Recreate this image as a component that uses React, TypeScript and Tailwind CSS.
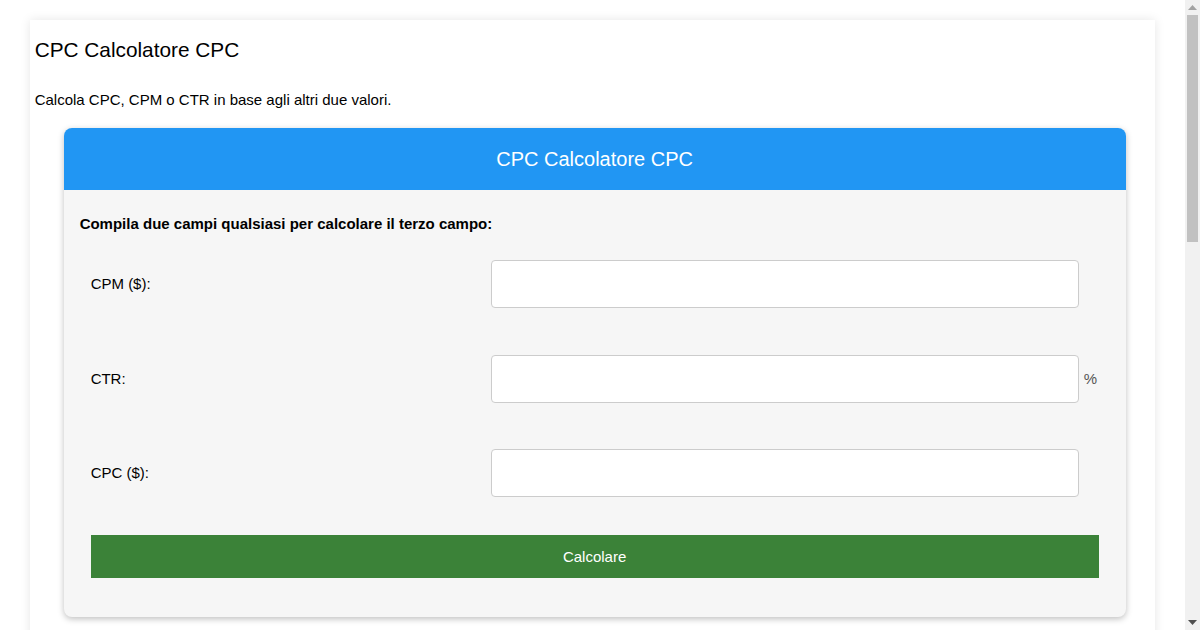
import React from "react";

const font = { fontFamily: '"Liberation Sans", Arial, sans-serif' };

function Row({ label, suffix }: { label: string; suffix?: string }) {
  return (
    <div className="flex items-center pl-[27px] h-[48px]">
      <label className="w-[400px] text-[15px] leading-[18px] text-black">{label}</label>
      <input
        type="text"
        className="w-[588px] h-[48px] bg-white border border-[#cccccc] rounded-[4px] outline-none px-2 text-[15px]"
      />
      {suffix && <span className="ml-[5px] text-[15px] leading-[18px] text-[#555555]">{suffix}</span>}
    </div>
  );
}

export default function App() {
  return (
    <div className="h-[630px] w-[1200px] flex overflow-hidden bg-white" style={font}>
      <div className="flex-1 overflow-hidden">
        <div className="w-[95%] mx-auto mt-5 bg-white shadow-[0_0_10px_rgba(0,0,0,0.1)] pt-[18px] pl-[5px] pb-10 min-h-[1000px]">
          <h1 className="text-[20.8px] leading-[24px] font-normal text-black">CPC Calcolatore CPC</h1>
          <p className="mt-[29px] text-[15px] leading-[18px] text-black">
            Calcola CPC, CPM o CTR in base agli altri due valori.
          </p>
          <div className="ml-[29px] mt-[19px] w-[1062px] rounded-[8px] bg-[#f6f6f6] shadow-[0_2px_6px_rgba(0,0,0,0.25)] overflow-hidden">
            <div className="h-[62px] bg-[#2196f3] flex items-center justify-center text-white text-[20px] leading-[24px]">
              CPC Calcolatore CPC
            </div>
            <div className="pt-[25px] pb-[39px]">
              <div className="pl-[16px] text-[15px] leading-[18px] font-bold text-black">
                Compila due campi qualsiasi per calcolare il terzo campo:
              </div>
              <div className="mt-[27px] flex flex-col gap-[46.5px]">
                <Row label="CPM ($):" />
                <Row label="CTR:" suffix="%" />
                <Row label="CPC ($):" />
              </div>
              <div className="pl-[27px] mt-[38px]">
                <button className="w-[1008px] h-[43px] bg-[#3b8238] text-white text-[15px] leading-[18px]">
                  Calcolare
                </button>
              </div>
            </div>
          </div>
        </div>
      </div>
      <div className="w-[15px] h-[630px] bg-[#f1f1f1] flex flex-col items-center">
        <div className="h-[15px] w-full flex items-center justify-center">
          <svg width="9" height="5" viewBox="0 0 9 5">
            <polygon points="4.5,0 9,5 0,5" fill="#a3a3a3" />
          </svg>
        </div>
        <div className="w-[11px] h-[227px] bg-[#c1c1c1]" />
        <div className="flex-1" />
        <div className="h-[15px] w-full flex items-center justify-center">
          <svg width="9" height="5" viewBox="0 0 9 5">
            <polygon points="0,0 9,0 4.5,5" fill="#505050" />
          </svg>
        </div>
      </div>
    </div>
  );
}
